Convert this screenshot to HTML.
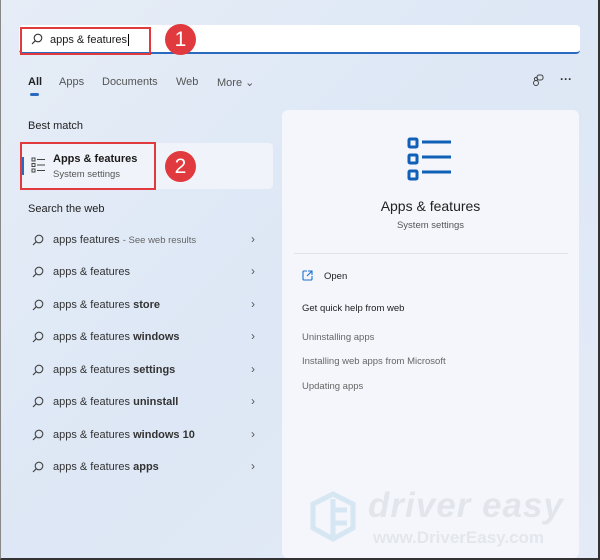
<!DOCTYPE html>
<html><head><style>
*{margin:0;padding:0;box-sizing:border-box}
body{width:600px;height:560px;overflow:hidden;font-family:"Liberation Sans",sans-serif;background:#e3ebf6;position:relative;color:#1a1a1a}
.bg{position:absolute;left:0;top:0;width:600px;height:560px;background:linear-gradient(135deg,#e6edf7 0%,#dde7f5 50%,#e4ebf6 100%);border-right:2px solid #333;border-bottom:2px solid #333;border-left:1px solid #888}
.abs{position:absolute}
.search{left:19px;top:25px;width:561px;height:29px;background:#fff;border-radius:4px;border-bottom:2px solid #2a6bbf}
.t{position:absolute;white-space:nowrap}
.red{position:absolute;border:2px solid #e03a3e}
.num{position:absolute;width:31px;height:31px;border-radius:50%;background:#e03a3e;color:#fff;font-size:21px;text-align:center;line-height:31px}
.row{position:absolute;left:30px;width:236px;height:20px;font-size:11px;color:#333}
.row svg{position:absolute;left:2px;top:4px}
.row .x{position:absolute;left:23px;top:4px}
.row .c{position:absolute;left:221px;top:2px;color:#555;font-size:12px}
.card{left:282px;top:110px;width:297px;height:448px;background:#f4f6fb;border-radius:6px}
</style></head><body>
<div class="bg"></div>
<div class="abs search"></div>
<svg class="abs" style="left:31px;top:33px" width="12" height="12" viewBox="0 0 12 12"><circle cx="7" cy="5" r="3.8" fill="none" stroke="#333" stroke-width="1.1"/><path d="M4.3 7.7 L1 11" stroke="#333" stroke-width="1.2"/></svg>
<div class="t" style="left:50px;top:34px;font-size:11px">apps &amp; features<span style="border-left:1px solid #000;margin-left:1px"></span></div>
<div class="red" style="left:20px;top:27px;width:131px;height:28px"></div>
<div class="num" style="left:165px;top:24px">1</div>
<div class="t" style="left:28px;top:76px;font-size:11px;font-weight:bold;color:#222">All</div>
<div class="abs" style="left:30px;top:93px;width:9px;height:3px;background:#2a6bbf;border-radius:2px"></div>
<div class="t" style="left:59px;top:76px;font-size:11px;color:#555">Apps</div>
<div class="t" style="left:102px;top:76px;font-size:11px;color:#555">Documents</div>
<div class="t" style="left:176px;top:76px;font-size:11px;color:#555">Web</div>
<div class="t" style="left:217px;top:76px;font-size:11px;color:#555">More ⌄</div>
<svg class="abs" style="left:532px;top:73px" width="13" height="14" viewBox="0 0 13 14"><circle cx="4" cy="10" r="2.5" fill="none" stroke="#444"/><rect x="5" y="2" width="6" height="5" rx="2" fill="none" stroke="#444"/><circle cx="4" cy="6" r="1.6" fill="none" stroke="#444"/></svg>
<div class="t" style="left:560px;top:72px;font-size:12px;color:#333;font-weight:bold">···</div>
<div class="t" style="left:28px;top:120px;font-size:11px;color:#222">Best match</div>
<div class="abs" style="left:21px;top:143px;width:252px;height:46px;background:#f0f3f9;border-radius:4px"></div>
<div class="abs" style="left:22px;top:157px;width:2px;height:18px;background:#2a6bbf"></div>
<svg class="abs" style="left:31px;top:157px" width="15" height="16" viewBox="0 0 15 16"><g fill="none" stroke="#444" stroke-width="1"><rect x="1" y="1" width="3" height="3"/><rect x="1" y="6.5" width="3" height="3"/><rect x="1" y="12" width="3" height="3"/><path d="M6 2.5h8M6 8h8M6 13.5h8"/></g></svg>
<div class="t" style="left:53px;top:153px;font-size:11px;font-weight:bold;color:#1a1a1a">Apps &amp; features</div>
<div class="t" style="left:53px;top:169px;font-size:9.5px;color:#555">System settings</div>
<div class="red" style="left:20px;top:142px;width:136px;height:48px"></div>
<div class="num" style="left:165px;top:151px">2</div>
<div class="t" style="left:28px;top:203px;font-size:11px;color:#222">Search the web</div>

<div class="row" style="top:230px"><svg width="12" height="12" viewBox="0 0 12 12"><circle cx="7" cy="5" r="3.8" fill="none" stroke="#444" stroke-width="1.1"/><path d="M4.3 7.7 L1 11" stroke="#444" stroke-width="1.2"/></svg><span class="x">apps features <span style="color:#666;font-size:9.5px">- See web results</span></span><span class="c">›</span></div>
<div class="row" style="top:262px"><svg width="12" height="12" viewBox="0 0 12 12"><circle cx="7" cy="5" r="3.8" fill="none" stroke="#444" stroke-width="1.1"/><path d="M4.3 7.7 L1 11" stroke="#444" stroke-width="1.2"/></svg><span class="x">apps &amp; features</span><span class="c">›</span></div>
<div class="row" style="top:295px"><svg width="12" height="12" viewBox="0 0 12 12"><circle cx="7" cy="5" r="3.8" fill="none" stroke="#444" stroke-width="1.1"/><path d="M4.3 7.7 L1 11" stroke="#444" stroke-width="1.2"/></svg><span class="x">apps &amp; features <b>store</b></span><span class="c">›</span></div>
<div class="row" style="top:327px"><svg width="12" height="12" viewBox="0 0 12 12"><circle cx="7" cy="5" r="3.8" fill="none" stroke="#444" stroke-width="1.1"/><path d="M4.3 7.7 L1 11" stroke="#444" stroke-width="1.2"/></svg><span class="x">apps &amp; features <b>windows</b></span><span class="c">›</span></div>
<div class="row" style="top:360px"><svg width="12" height="12" viewBox="0 0 12 12"><circle cx="7" cy="5" r="3.8" fill="none" stroke="#444" stroke-width="1.1"/><path d="M4.3 7.7 L1 11" stroke="#444" stroke-width="1.2"/></svg><span class="x">apps &amp; features <b>settings</b></span><span class="c">›</span></div>
<div class="row" style="top:392px"><svg width="12" height="12" viewBox="0 0 12 12"><circle cx="7" cy="5" r="3.8" fill="none" stroke="#444" stroke-width="1.1"/><path d="M4.3 7.7 L1 11" stroke="#444" stroke-width="1.2"/></svg><span class="x">apps &amp; features <b>uninstall</b></span><span class="c">›</span></div>
<div class="row" style="top:425px"><svg width="12" height="12" viewBox="0 0 12 12"><circle cx="7" cy="5" r="3.8" fill="none" stroke="#444" stroke-width="1.1"/><path d="M4.3 7.7 L1 11" stroke="#444" stroke-width="1.2"/></svg><span class="x">apps &amp; features <b>windows 10</b></span><span class="c">›</span></div>
<div class="row" style="top:457px"><svg width="12" height="12" viewBox="0 0 12 12"><circle cx="7" cy="5" r="3.8" fill="none" stroke="#444" stroke-width="1.1"/><path d="M4.3 7.7 L1 11" stroke="#444" stroke-width="1.2"/></svg><span class="x">apps &amp; features <b>apps</b></span><span class="c">›</span></div>

<div class="abs card"></div>
<svg class="abs" style="left:407px;top:137px" width="46" height="45" viewBox="0 0 46 45"><g fill="none" stroke="#1060b8" stroke-width="3"><rect x="2" y="2" width="8" height="8" rx="1"/><rect x="2" y="18" width="8" height="8" rx="1"/><rect x="2" y="34" width="8" height="8" rx="1"/><path d="M15 5h29M15 20h29M15 35h29"/></g></svg>
<div class="t" style="left:282px;width:297px;text-align:center;top:198px;font-size:14px;color:#222">Apps &amp; features</div>
<div class="t" style="left:282px;width:297px;text-align:center;top:220px;font-size:9.5px;color:#555">System settings</div>
<div class="abs" style="left:294px;top:253px;width:274px;height:1px;background:#dde1e8"></div>
<svg class="abs" style="left:302px;top:270px" width="11" height="11" viewBox="0 0 11 11"><path d="M5 1H2a1 1 0 0 0-1 1v7a1 1 0 0 0 1 1h7a1 1 0 0 0 1-1V6M6 1h4v4M10 1L5 6" fill="none" stroke="#1a6fd1" stroke-width="1.1"/></svg>
<div class="t" style="left:324px;top:271px;font-size:9.5px;color:#222">Open</div>
<div class="t" style="left:302px;top:303px;font-size:9.5px;color:#222">Get quick help from web</div>
<div class="t" style="left:302px;top:332px;font-size:9.5px;color:#666">Uninstalling apps</div>
<div class="t" style="left:302px;top:356px;font-size:9.5px;color:#666">Installing web apps from Microsoft</div>
<div class="t" style="left:302px;top:381px;font-size:9.5px;color:#666">Updating apps</div>

<svg class="abs" style="left:309px;top:490px" width="48" height="52" viewBox="0 0 48 52"><g fill="none" stroke="#d6e6f3" stroke-width="5"><path d="M24 4L44 14V38L24 49L4 38V14Z"/><path d="M24 9V46M24 20H38M24 33H38"/></g></svg>
<div class="t" style="left:368px;top:486px;font-size:35px;font-style:italic;font-weight:bold;color:#e2e6ec;letter-spacing:1px">driver easy</div>
<div class="t" style="left:373px;top:528px;font-size:17px;font-weight:bold;color:#e3e7ed">www.DriverEasy.com</div>
</body></html>
